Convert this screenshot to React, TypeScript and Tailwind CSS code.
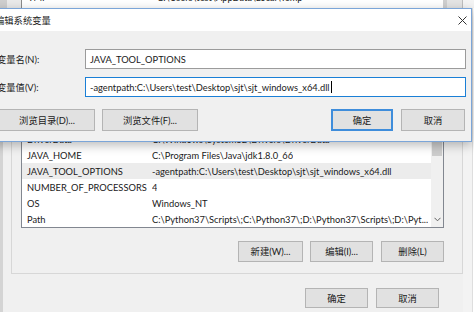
import React from "react";

const rows: [string, string][] = [
  ["", ""],
  ["DriverData", "C:\\Windows\\System32\\Drivers\\DriverData"],
  ["JAVA_HOME", "C:\\Program Files\\Java\\jdk1.8.0_66"],
  ["JAVA_TOOL_OPTIONS", "-agentpath:C:\\Users\\test\\Desktop\\sjt\\sjt_windows_x64.dll"],
  ["NUMBER_OF_PROCESSORS", "4"],
  ["OS", "Windows_NT"],
  ["Path", "C:\\Python37\\Scripts\\;C:\\Python37\\;D:\\Python37\\Scripts\\;D:\\Pyt..."],
];

function Btn({
  children,
  className,
  def,
}: {
  children: React.ReactNode;
  className: string;
  def?: boolean;
}) {
  return (
    <div
      className={
        "flex items-center justify-center whitespace-nowrap bg-[#e1e1e1] text-[#1a1a1a] " +
        (def ? "border-2 border-[#3f8ddb] " : "border border-[#b4b4b4] ") +
        className
      }
    >
      {children}
    </div>
  );
}

export default function App() {
  return (
    <div className="relative w-[474px] h-[312px] overflow-hidden bg-[#f0f0f0] text-[9.3px] leading-[13px] text-[#1a1a1a] font-['Lato','Noto_Sans_CJK_SC',sans-serif]">
      {/* background window */}
      <div className="flex flex-col h-full">
        {/* top strip: bottom of user variable list */}
        <div className="h-[8px] flex overflow-hidden">
          <div className="w-[7px] bg-[#cfcfcf]" />
          <div className="w-[14px] bg-[#eaeaea]" />
          <div className="w-[1px] bg-[#8a8a8a]" />
          <div className="w-[421px] bg-white overflow-hidden">
            <div className="flex h-[16px] items-center mt-[-11px] whitespace-nowrap">
              <div className="w-[135px] pl-[6px]">TMP</div>
              <div>C:\Users\test\AppData\Local\Temp</div>
            </div>
          </div>
          <div className="w-[4px] bg-[#cfcfcf]" />
          <div className="w-[15px] bg-[#e4e4e4]" />
          <div className="w-[1px] bg-[#bdbdbd]" />
          <div className="flex-1 bg-[#f4f4f4]" />
        </div>

        <div className="flex flex-1">
          <div className="w-[3px] bg-[#d4d4d4]" />
          <div className="w-[8px]" />
          <div className="flex flex-col w-[452px]">
            <div className="h-[100px]" />
            {/* system variables group */}
            <div className="h-[166px] flex flex-col border-l border-r border-b border-[#d7d7d7] pl-[9px] pr-[18px] pt-[6px] pb-[11px]">
              <div className="h-[114px] flex border border-[#828790] bg-white">
                <div className="flex-1 flex flex-col overflow-hidden">
                  {rows.map(([n, v], i) => (
                    <div
                      key={i}
                      className={
                        "flex h-[16px] shrink-0 items-center whitespace-nowrap " +
                        (n === "JAVA_TOOL_OPTIONS" ? "bg-[#ececec]" : "")
                      }
                    >
                      <div className="w-[130px] shrink-0 pl-[5px]">{n}</div>
                      <div className="overflow-hidden leading-[15px]">{v}</div>
                    </div>
                  ))}
                </div>
                <div className="w-[12px] flex flex-col bg-[#f0f0f0]">
                  <div className="h-[41px] mx-[1px] bg-[#cdcdcd]" />
                  <div className="flex-1" />
                  <div className="h-[16px] flex items-center justify-center">
                    <svg width="7" height="5" viewBox="0 0 7 5">
                      <path d="M0.5 0.8 L3.5 3.8 L6.5 0.8" fill="none" stroke="#606060" strokeWidth="1" />
                    </svg>
                  </div>
                </div>
              </div>
              <div className="mt-[13px] h-[21px] flex justify-end">
                <Btn className="w-[65px] h-[21px]">新建(W)...</Btn>
                <Btn className="w-[63px] h-[21px] ml-[7px]">编辑(I)...</Btn>
                <Btn className="w-[63px] h-[21px] ml-[8px]">删除(L)</Btn>
              </div>
            </div>
            <div className="mt-[14px] flex justify-end pr-[24px]">
              <Btn className="w-[63px] h-[20px]">确定</Btn>
              <Btn className="w-[63px] h-[20px] ml-[8px]">取消</Btn>
            </div>
          </div>
          <div className="w-[9px] bg-[#f3f3f3]" />
          <div className="w-[1px] bg-[#dedede]" />
          <div className="flex-1 bg-white" />
        </div>
      </div>

      {/* edit dialog overlay */}
      <div className="absolute left-[-10px] top-[8px] w-[482px] flex flex-col border border-[#7ba5d8] shadow-[0_3px_10px_rgba(0,0,0,0.28)]">
        <div className="h-[22px] bg-white flex items-center pl-[4px] pr-[4px]">
          <span>编辑系统变量</span>
          <div className="ml-auto w-[10px] h-[10px] flex items-center justify-center">
            <svg width="9" height="9" viewBox="0 0 9 9">
              <path d="M0.5 0.5 L8.5 8.5 M8.5 0.5 L0.5 8.5" stroke="#333" strokeWidth="1" />
            </svg>
          </div>
        </div>
        <div className="h-[110px] bg-[#f0f0f0] flex flex-col pt-[18px] pb-[10px]">
          <div className="flex h-[20px] items-center">
            <div className="w-[94px] pl-[6px]">变量名(N):</div>
            <div className="w-[381px] h-[20px] flex items-center border border-[#9b9b9b] bg-white pl-[4px]">
              JAVA_TOOL_OPTIONS
            </div>
          </div>
          <div className="flex h-[20px] items-center mt-[8px]">
            <div className="w-[94px] pl-[6px]">变量值(V):</div>
            <div className="w-[381px] h-[20px] flex items-center border border-[#1a7fd6] bg-white pl-[4px] whitespace-nowrap">
              <span>-agentpath:C:\Users\test\Desktop\sjt\sjt_windows_x64.dll</span>
              <span className="inline-block w-[1px] h-[12px] bg-black ml-[1px]" />
            </div>
          </div>
          <div className="flex h-[22px] mt-[12px] pl-[8px] pr-[6px]">
            <Btn className="w-[96px] h-[22px]">浏览目录(D)...</Btn>
            <Btn className="w-[96px] h-[22px] ml-[7px]">浏览文件(F)...</Btn>
            <Btn def className="w-[62px] h-[22px] ml-auto">确定</Btn>
            <Btn className="w-[64px] h-[22px] ml-[8px]">取消</Btn>
          </div>
        </div>
      </div>
    </div>
  );
}
